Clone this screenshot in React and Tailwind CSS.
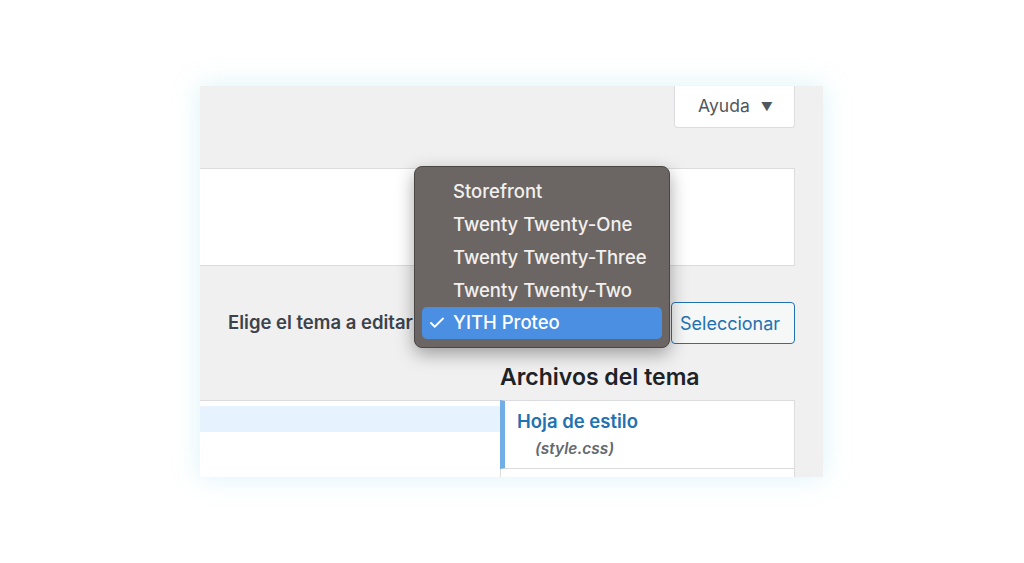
import { Check } from 'lucide-react';

const themes = ['Storefront', 'Twenty Twenty-One', 'Twenty Twenty-Three', 'Twenty Twenty-Two', 'YITH Proteo'];

function ThemeMenu() {
  return (
    <div className="absolute left-[214px] top-[80px] w-[256px] rounded-[8px] border border-[#4a4643] bg-[#6b6663] pt-[8px] pb-[8px] shadow-[0_6px_18px_rgba(0,0,0,0.35)]">
      {themes.map((name) => {
        const active = name === 'YITH Proteo';
        return (
          <div
            key={name}
            className={
              active
                ? 'mx-[7px] flex h-[32px] items-center rounded-[5px] bg-[#4a8fe2] pl-[6px] text-[18.5px] font-medium text-white'
                : 'mx-[7px] flex h-[33px] items-center pl-[31px] text-[18.5px] font-medium text-[#f2f0ee]'
            }
          >
            {active && <Check className="mr-[7px] h-[18px] w-[18px]" strokeWidth={2.5} />}
            <span>{name}</span>
          </div>
        );
      })}
    </div>
  );
}

export default function App() {
  return (
    <div className="h-[563px] w-[1024px] overflow-hidden bg-white pl-[200px] pt-[86px]" style={{ fontFamily: 'Inter, "Noto Sans", sans-serif' }}>
      <div className="relative flex h-[391px] w-[623px] flex-col bg-[#f0f0f1] shadow-[0_0_24px_rgba(150,220,235,0.35)]">
        {/* help tab */}
        <div className="flex justify-end pr-[28px]">
          <div className="flex h-[42px] w-[121px] items-center justify-center gap-[11px] rounded-b-[4px] border border-t-0 border-[#dcdcde] bg-white pl-[2px] text-[17.5px] text-[#50575e]">
            <span>Ayuda</span>
            <span className="text-[12px]">▼</span>
          </div>
        </div>

        {/* notice box */}
        <div className="mt-[40px] h-[98px] w-[595px] border border-l-0 border-[#dcdcde] bg-white" />

        {/* theme selector row */}
        <div className="mt-[36px] flex h-[42px] items-center pr-[28px]">
          <span className="pl-[28px] text-[18.5px] font-semibold text-[#3c434a]">Elige el tema a editar</span>
          <div className="flex-1" />
          <div className="flex h-[42px] w-[124px] items-center rounded-[4px] border border-[#2271b1] bg-[#f6f7f7] pl-[8px] text-[18px] text-[#2271b1]">
            Seleccionar
          </div>
        </div>

        <div className="mt-[18px] pl-[300px] text-[23px] font-semibold leading-[30px] text-[#1d2327]">Archivos del tema</div>

        {/* editor + file list */}
        <div className="mt-[8px] flex flex-1">
          <div className="w-[300px] border-t border-[#dcdcde] bg-white pt-[5px]">
            <div className="h-[26px] bg-[#e6f2fd]" />
          </div>
          <div className="flex w-[295px] flex-col">
            <div className="h-[69px] border border-l-[5px] border-[#dcdcde] border-l-[#72aee6] bg-white pl-[12px] pt-[8px]">
              <div className="text-[18.5px] font-semibold leading-[24px] text-[#2271b1]">Hoja de estilo</div>
              <div className="mt-[5px] pl-[18px] text-[15.5px] font-semibold italic leading-[22px] text-[#646970]">(style.css)</div>
            </div>
            <div className="flex-1 border-x border-[#dcdcde] bg-white" />
          </div>
        </div>

        <ThemeMenu />
      </div>
    </div>
  );
}
